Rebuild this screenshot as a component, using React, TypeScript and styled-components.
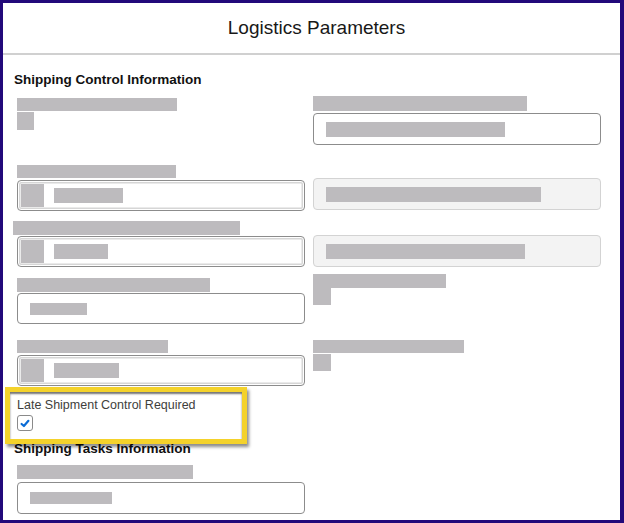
import React, { FC } from 'react'
import styled, { createGlobalStyle } from 'styled-components'

const GlobalStyle = createGlobalStyle`
  body {
    margin: 0;
    font-family: 'Liberation Sans', Arial, sans-serif;
    background: #fff;
  }
`

const Frame = styled('div')`
  width: 624px;
  height: 523px;
  box-sizing: border-box;
  border: 3px solid #22097a;
  border-right-width: 4px;
  background: #fff;
  overflow: hidden;
  color: #181818;
`

const Header = styled('header')`
  height: 50px;
  display: flex;
  align-items: center;
  justify-content: center;
  padding-left: 10px;
  font-size: 19px;
  border-bottom: 2px solid #d0d0d0;
`

const SectionTitle = styled('h2')<{ $mt: number }>`
  margin: ${p => p.$mt}px 0 0 11px;
  font-size: 13.5px;
  line-height: 18px;
  font-weight: 700;
  color: #111;
`

const Row = styled('div')<{ $h: number; $mt?: number }>`
  display: grid;
  grid-template-columns: 288px 288px;
  column-gap: 8px;
  align-items: start;
  height: ${p => p.$h}px;
  margin: ${p => p.$mt || 0}px 0 0 14px;
`

const Field = styled('div')`
  display: flex;
  flex-direction: column;
  align-items: flex-start;
`

const Bar = styled('div')<{ $w: number; $h?: number; $mt?: number; $ml?: number }>`
  width: ${p => p.$w}px;
  height: ${p => p.$h || 13}px;
  margin-top: ${p => p.$mt || 0}px;
  margin-left: ${p => p.$ml || 0}px;
  background: #bdbbbe;
  flex-shrink: 0;
`

type Kind = 'plain' | 'lookup' | 'disabled'

const Input = styled('div')<{ $kind: Kind; $mt?: number; $h?: number }>`
  box-sizing: border-box;
  width: 288px;
  height: ${p => p.$h || 31}px;
  margin-top: ${p => p.$mt || 0}px;
  border-radius: 4px;
  display: flex;
  align-items: center;
  border: 1px solid ${p => (p.$kind === 'disabled' ? '#d3d3d3' : '#8c8c8c')};
  background: ${p => (p.$kind === 'disabled' ? '#f3f3f3' : '#fff')};
  padding: ${p => (p.$kind === 'lookup' ? '2px' : '0 0 0 12px')};
  box-shadow: ${p =>
    p.$kind === 'lookup' ? 'inset 0 0 0 1px #fff, inset 0 0 0 2.5px #d6d6d6' : 'none'};
`

const LookupIcon = styled('div')`
  width: 23px;
  align-self: stretch;
  margin: 1px 10px 1px 1px;
  background: #bdbbbe;
`

const CheckLabel = styled('div')`
  font-size: 12.5px;
  line-height: 16px;
  color: #3e3e3c;
  white-space: nowrap;
`

const CheckBox = styled('div')`
  box-sizing: border-box;
  width: 16px;
  height: 16px;
  margin-top: 2px;
  border: 1px solid #8a8a8a;
  border-radius: 3px;
  display: flex;
  align-items: center;
  justify-content: center;
  background: #fff;
`

const Highlighted = styled('div')`
  position: relative;
  margin: 9px 0 0 14px;
  width: 288px;
`

const Spotlight = styled('div')`
  position: absolute;
  left: -12px;
  top: -10px;
  width: 242px;
  height: 57px;
  box-sizing: border-box;
  border: 5px solid #f4d22b;
  box-shadow: 2px 3px 3px rgba(0, 0, 0, 0.45), inset 0 2px 2px rgba(0, 0, 0, 0.55);
  pointer-events: none;
`

interface InputProps {
  kind: Kind
  value: number
  mt?: number
  h?: number
}

const ValueInput: FC<InputProps> = ({ kind, value, mt, h }) => (
  <Input $kind={kind} $mt={mt} $h={h}>
    {kind === 'lookup' && <LookupIcon />}
    <Bar $w={value} $h={kind === 'plain' ? 12 : 15} />
  </Input>
)

const App: FC = () => (
  <>
    <GlobalStyle />
    <Frame>
      <Header>Logistics Parameters</Header>
      <SectionTitle $mt={16}>Shipping Control Information</SectionTitle>

      <Row $h={69} $mt={5}>
        <Field>
          <Bar $w={160} $mt={4} />
          <Bar $w={17} $h={18} $mt={1} />
        </Field>
        <Field>
          <Bar $w={214} $h={15} $mt={2} />
          <Input $kind="plain" $mt={2} $h={32}>
            <Bar $w={179} $h={15} />
          </Input>
        </Field>
      </Row>

      <Row $h={56}>
        <Field>
          <Bar $w={159} $mt={2} />
          <ValueInput kind="lookup" value={69} mt={2} />
        </Field>
        <Field>
          <Input $kind="disabled" $mt={15} $h={32}>
            <Bar $w={215} $h={15} />
          </Input>
        </Field>
      </Row>

      <Row $h={53}>
        <Field>
          <Bar $w={227} $h={14} $mt={2} $ml={-4} />
          <ValueInput kind="lookup" value={54} mt={1} />
        </Field>
        <Field>
          <Input $kind="disabled" $mt={16} $h={32}>
            <Bar $w={199} $h={15} />
          </Input>
        </Field>
      </Row>

      <Row $h={66}>
        <Field>
          <Bar $w={193} $h={14} $mt={6} />
          <ValueInput kind="plain" value={57} mt={1} />
        </Field>
        <Field>
          <Bar $w={133} $h={14} $mt={2} />
          <Bar $w={18} $h={17} />
        </Field>
      </Row>

      <Row $h={50}>
        <Field>
          <Bar $w={151} $mt={2} />
          <ValueInput kind="lookup" value={65} mt={2} />
        </Field>
        <Field>
          <Bar $w={151} $mt={2} />
          <Bar $w={18} $h={17} $mt={1} />
        </Field>
      </Row>

      <Highlighted>
        <CheckLabel>Late Shipment Control Required</CheckLabel>
        <CheckBox>
          <svg width="10" height="9" viewBox="0 0 10 9">
            <path
              d="M1.6 5 L3.9 7 L8.4 1.8"
              fill="none"
              stroke="#0b6cd6"
              strokeWidth="2.2"
              strokeLinecap="round"
              strokeLinejoin="round"
            />
          </svg>
        </CheckBox>
        <Spotlight />
      </Highlighted>

      <SectionTitle $mt={9}>Shipping Tasks Information</SectionTitle>

      <Row $h={60} $mt={7}>
        <Field>
          <Bar $w={176} $h={14} />
          <ValueInput kind="plain" value={82} mt={3} h={32} />
        </Field>
      </Row>
    </Frame>
  </>
)

export default App
